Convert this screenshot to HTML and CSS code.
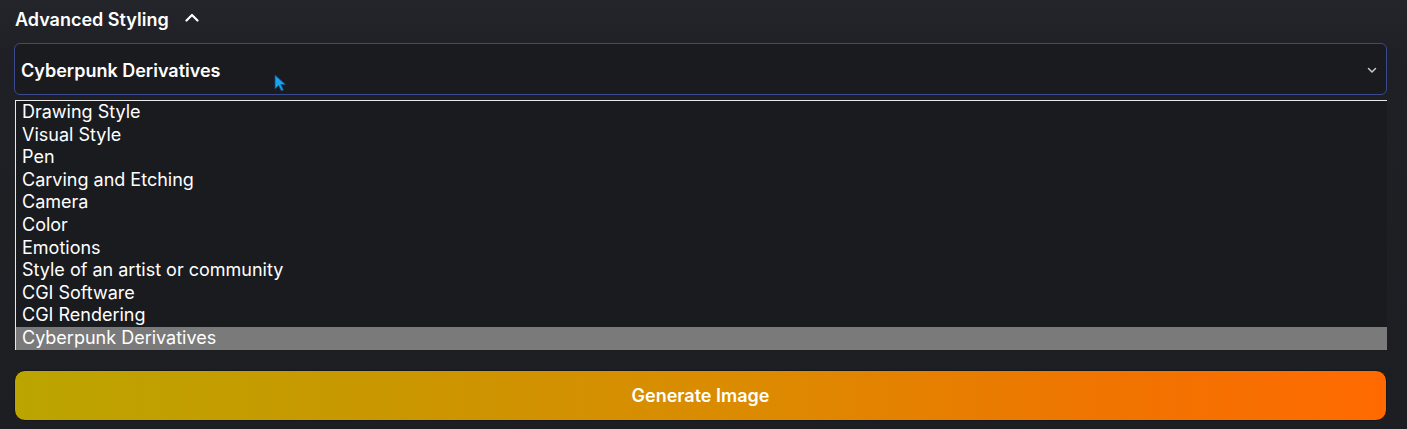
FILE: index.html
```html
<!DOCTYPE html>
<html lang="en">
<head>
<meta charset="utf-8">
<title>Advanced Styling</title>
<link rel="stylesheet" href="styles.css">
</head>
<body>
<div class="panel">
  <div class="heading">
    <span class="heading-text">Advanced Styling</span>
    <svg class="chev-up" width="14" height="9" viewBox="0 0 14 9"><path d="M1.5 7.5 L7 2 L12.5 7.5" fill="none" stroke="#ffffff" stroke-width="2.2" stroke-linecap="round" stroke-linejoin="round"/></svg>
  </div>
  <div class="select">
    <span class="select-value">Cyberpunk Derivatives</span>
    <svg class="chev-down" width="10" height="7" viewBox="0 0 10 7"><path d="M1.5 1.5 L5 5 L8.5 1.5" fill="none" stroke="#c8c8c8" stroke-width="1.5" stroke-linecap="round" stroke-linejoin="round"/></svg>
    <svg class="cursor" width="14" height="18" viewBox="0 0 14 18"><path d="M1 1 L1 15 L4.5 11.5 L7.5 17 L9.5 16 L6.8 10.6 L11.5 10.6 Z" fill="#1aa3f0" stroke="#0b4f80" stroke-width="0.8"/></svg>
  </div>
  <ul class="options">
    <li>Drawing Style</li>
    <li>Visual Style</li>
    <li>Pen</li>
    <li>Carving and Etching</li>
    <li>Camera</li>
    <li>Color</li>
    <li>Emotions</li>
    <li>Style of an artist or community</li>
    <li>CGI Software</li>
    <li>CGI Rendering</li>
    <li class="selected">Cyberpunk Derivatives</li>
  </ul>
  <button class="generate">Generate Image</button>
</div>
</body>
</html>
```
FILE: styles.css
```css
html, body {
  margin: 0;
  padding: 0;
}
body {
  width: 1407px;
  height: 429px;
  overflow: hidden;
  background: linear-gradient(180deg, #23252b 0px, #1f2025 60px, #1d1e22 429px);
  font-family: Inter, "Noto Sans", sans-serif;
  color: #ffffff;
}
.panel {
  padding: 7px 20px 0 14px;
  display: flex;
  flex-direction: column;
}
.heading {
  display: flex;
  align-items: center;
  gap: 16px;
  height: 24px;
  padding-left: 1px;
}
.heading-text {
  font-size: 18px;
  font-weight: 600;
}
.chev-up {
  display: block;
  margin-top: -3px;
}
.select {
  position: relative;
  margin-top: 12px;
  height: 50px;
  border: 1px solid #3b4a8e;
  border-radius: 6px;
  background: #1a1b1f;
  display: flex;
  align-items: center;
  justify-content: space-between;
  padding: 0 9px 0 6px;
}
.select-value {
  font-size: 18px;
  font-weight: 600;
  margin-top: 2px;
}
.chev-down {
  display: block;
  margin-top: 2px;
}
.cursor {
  position: absolute;
  left: 259px;
  top: 30px;
}
.options {
  list-style: none;
  margin: 5px 0 0 1px;
  padding: 0;
  width: 1371px;
  background: #1a1b1f;
  border-top: 1px solid #e8e8e8;
  border-left: 1px solid #e8e8e8;
}
.options li {
  height: 22.6px;
  line-height: 22.6px;
  font-size: 18px;
  padding-left: 6px;
  color: #ffffff;
}
.options li.selected {
  background: #7a7a7a;
}
.generate {
  margin-top: 20px;
  height: 51px;
  border: 1px solid #15161a;
  border-radius: 11px;
  background: linear-gradient(90deg, #bca500 0%, #c89800 25%, #dd8a00 55%, #f07400 80%, #ff6a00 100%);
  color: #ffffff;
  font-family: Inter, "Noto Sans", sans-serif;
  font-size: 18px;
  font-weight: 600;
  cursor: pointer;
}
```
